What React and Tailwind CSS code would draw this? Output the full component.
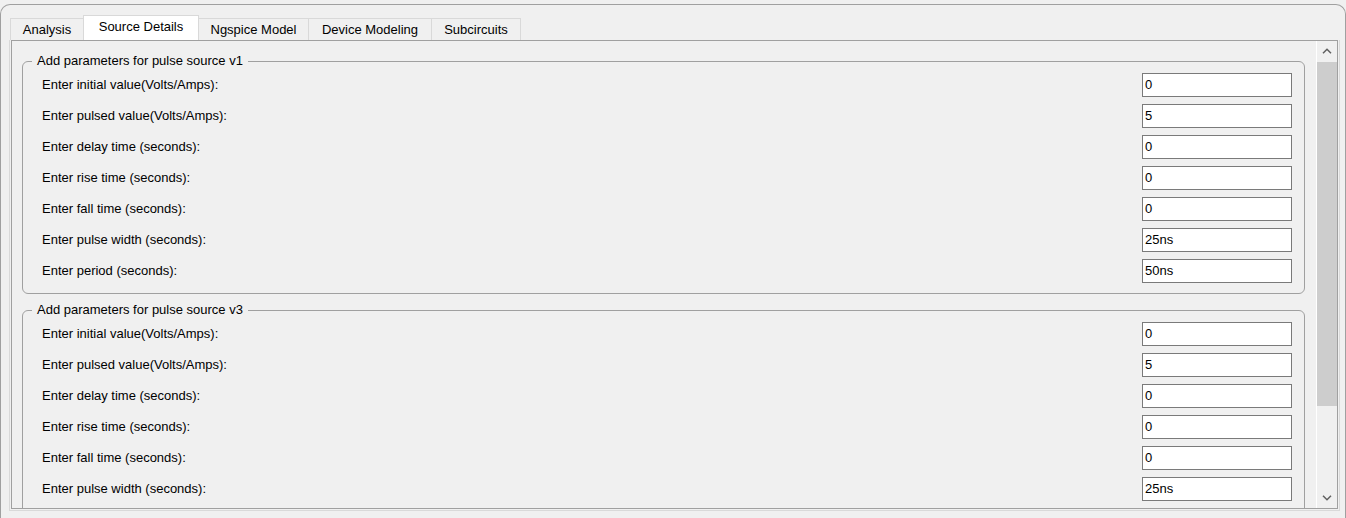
import React from "react";

const rows1 = [
  ["Enter initial value(Volts/Amps):", "0"],
  ["Enter pulsed value(Volts/Amps):", "5"],
  ["Enter delay time (seconds):", "0"],
  ["Enter rise time (seconds):", "0"],
  ["Enter fall time (seconds):", "0"],
  ["Enter pulse width (seconds):", "25ns"],
  ["Enter period (seconds):", "50ns"],
];

function Group({ title, rows }) {
  return (
    <fieldset className="ml-[10px] mr-[11px] border border-[#a0a0a0] rounded-[6px] px-0 pt-[4px] pb-[10px] min-w-0">
      <legend className="ml-[9px] px-[5px] text-[13px] leading-[16px] text-black">{title}</legend>
      <div className="flex flex-col gap-[7px]">
        {rows.map(([label, val], i) => (
          <div key={i} className="flex items-center justify-between h-[24px] pl-[19px] pr-[12px]">
            <span className="text-[13px] leading-[16px] text-black">{label}</span>
            <div className="w-[150px] h-[24px] border border-[#7a7a7a] bg-white flex items-center pl-[2px] text-[13px] text-black">
              {val}
            </div>
          </div>
        ))}
      </div>
    </fieldset>
  );
}

function Chevron({ up }) {
  return (
    <svg width="10" height="6" viewBox="0 0 10 6">
      <path
        d={up ? "M1 5.2 L5 1.2 L9 5.2" : "M1 0.8 L5 4.8 L9 0.8"}
        fill="none"
        stroke="#606060"
        strokeWidth="1.5"
      />
    </svg>
  );
}

export default function App() {
  const tabs = [
    ["Analysis", "w-[74px]"],
    ["Source Details", "w-[116px]"],
    ["Ngspice Model", "w-[111px]"],
    ["Device Modeling", "w-[124px]"],
    ["Subcircuits", "w-[90px]"],
  ];
  return (
    <div className="w-[1346px] h-[518px] bg-[#f0f0f0] overflow-hidden font-['Liberation_Sans',Arial,sans-serif]">
      <div className="mt-[4px] h-[514px] border border-b-0 border-[#a0a0a0] rounded-t-[10px] pl-[8px] pr-[5px] pt-[10px]">
        <div className="flex items-end h-[25px] pl-[1px]">
          {tabs.map(([t, w], i) => {
            const sel = i === 1;
            return (
              <div
                key={t}
                className={
                  (sel
                    ? "h-[25px] bg-white z-10 pb-[2px] "
                    : "h-[22px] bg-[#f0f0f0] ") +
                  (i > 0 ? "-ml-px " : "") +
                  w +
                  " border border-b-0 border-[#d9d9d9] flex items-center justify-center text-[13px] text-black"
                }
              >
                {t}
              </div>
            );
          })}
        </div>
        <div className="w-[1331px] h-[471px] border border-t-0 border-[#d9d9d9] p-[1px] pt-0">
          <div className="w-full h-full border border-[#a0a0a0] flex overflow-hidden">
            <div className="flex-1 overflow-hidden pt-[12px] flex flex-col gap-[8px]">
              <Group title="Add parameters for pulse source v1" rows={rows1} />
              <Group title="Add parameters for pulse source v3" rows={rows1} />
            </div>
            <div className="w-[21px] h-full border-l border-white bg-[#f0f0f0] flex flex-col">
              <div className="h-[20px] flex items-center justify-center">
                <Chevron up />
              </div>
              <div className="mt-[1px] h-[344px] bg-[#cdcdcd]" />
              <div className="flex-1" />
              <div className="h-[20px] flex items-center justify-center">
                <Chevron />
              </div>
            </div>
          </div>
        </div>
      </div>
    </div>
  );
}
